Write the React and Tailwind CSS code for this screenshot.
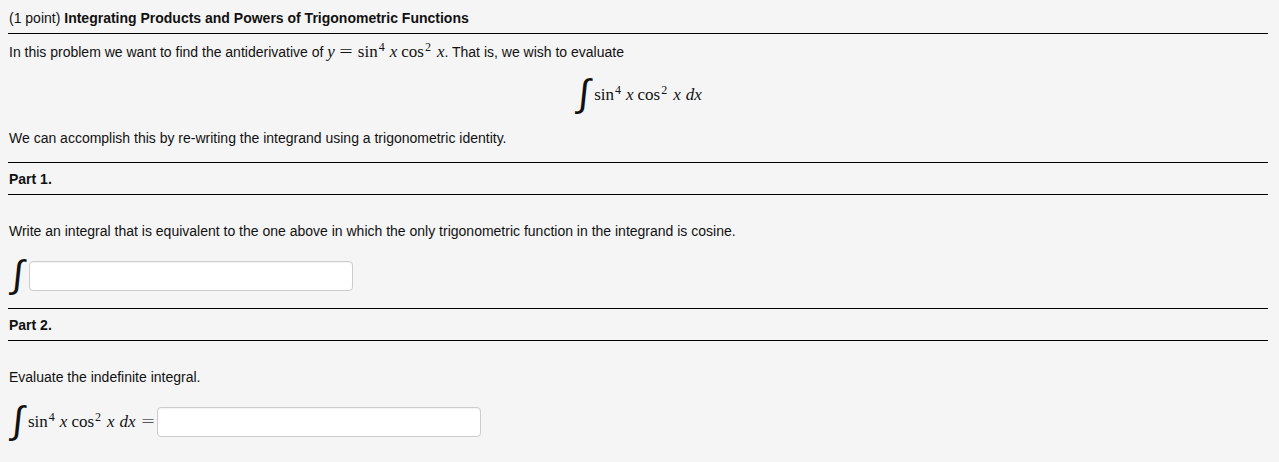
const serif = "font-['Liberation_Serif','Times_New_Roman',serif]";

function X() {
  return <i className="italic">x</i>;
}

function Sup({ children }) {
  return <sup className="text-[12px] leading-none align-baseline relative top-[-6px] ml-px">{children}</sup>;
}

function Equals({ className }) {
  return (
    <span className={`${serif} text-[17px] inline-block w-[14px] text-center scale-x-[1.4] ${className}`}>=</span>
  );
}

function SinCos({ dx = false }) {
  return (
    <span className={`${serif} text-[17px] whitespace-nowrap text-[#111]`}>
      sin<Sup>4</Sup>
      <span className="ml-[5px]"><X /></span>
      <span className="ml-[4px]">cos</span>
      <Sup>2</Sup>
      <span className="ml-[6px]"><X /></span>
      {dx && <i className="italic ml-[5px]">dx</i>}
    </span>
  );
}

function Integral() {
  return (
    <span className="font-['Noto_Sans',sans-serif] text-[38px] leading-none text-[#111] inline-block pl-[2px] -translate-y-[3px] -skew-x-[6deg]">
      ∫
    </span>
  );
}

function AnswerInput() {
  return (
    <input
      type="text"
      className="w-[324px] h-[30px] bg-white border border-[#ccc] rounded-[4px] shadow-[inset_0_1px_1px_rgba(0,0,0,0.05)]"
    />
  );
}

function PartHeading({ children }) {
  return (
    <div className="h-[33px] flex items-center border-y border-black font-bold pl-px pt-px -mb-px">
      {children}
    </div>
  );
}

export default function App() {
  return (
    <div className="h-[462px] bg-[#f5f5f5] pl-2 pr-[11px] text-[14px] text-[#111] font-['Liberation_Sans',Arial,sans-serif] overflow-hidden">
      <div className="h-[34px] flex items-center border-b border-black pl-px pt-[3px]">
        <span>(1 point)&nbsp;</span>
        <b className="font-bold">Integrating Products and Powers of Trigonometric Functions</b>
      </div>

      <p className="mt-[8px] pl-px h-[20px] flex items-center whitespace-pre">
        In this problem we want to find the antiderivative of{" "}
        <span className={`${serif} text-[17px] italic`}>y</span>
        <Equals className="ml-[4px] mr-[5px]" />
        <SinCos />
        . That is, we wish to evaluate
      </p>

      <div className="mt-[8px] h-[50px] flex items-center justify-center">
        <span className="w-[20px] pl-[3px]"><Integral /></span>
        <SinCos dx />
      </div>

      <p className="mt-[8px] pl-px h-[20px] flex items-center">
        We can accomplish this by re-writing the integrand using a trigonometric identity.
      </p>

      <div className="mt-[14px]">
        <PartHeading>Part 1.</PartHeading>
      </div>

      <p className="mt-[27px] pl-px h-[20px] flex items-center">
        Write an integral that is equivalent to the one above in which the only trigonometric function in the integrand is cosine.
      </p>

      <div className="mt-[17px] h-[36px] flex items-center pl-[3px]">
        <span className="w-[18px]"><Integral /></span>
        <AnswerInput />
      </div>

      <div className="mt-[14px]">
        <PartHeading>Part 2.</PartHeading>
      </div>

      <p className="mt-[27px] pl-px h-[20px] flex items-center">Evaluate the indefinite integral.</p>

      <div className="mt-[17px] h-[36px] flex items-center pl-[3px]">
        <span className="w-[17px]"><Integral /></span>
        <SinCos dx />
        <Equals className="ml-[5px] mr-[2px] text-[#555]" />
        <AnswerInput />
      </div>
    </div>
  );
}
